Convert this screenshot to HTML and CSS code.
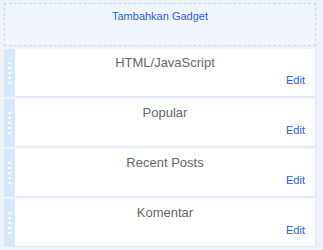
FILE: index.html
```html
<!DOCTYPE html>
<html lang="en">
<head>
  <meta charset="UTF-8">
  <meta name="viewport" content="width=device-width, initial-scale=1.0">
  <title>Tata Letak</title>
  <link rel="stylesheet" href="styles.css">
</head>
<body>
 <div class="section">
  <div class="add-gadget"><a href="#">Tambahkan Gadget</a></div>

  <div class="widget">
    <div class="handle"><span></span><span></span><span></span><span></span><span></span></div>
    <div class="widget-body">
      <div class="widget-title">HTML/JavaScript</div>
      <a class="edit-link" href="#">Edit</a>
    </div>
  </div>

  <div class="widget">
    <div class="handle"><span></span><span></span><span></span><span></span><span></span></div>
    <div class="widget-body">
      <div class="widget-title">Popular</div>
      <a class="edit-link" href="#">Edit</a>
    </div>
  </div>

  <div class="widget">
    <div class="handle"><span></span><span></span><span></span><span></span><span></span></div>
    <div class="widget-body">
      <div class="widget-title">Recent Posts</div>
      <a class="edit-link" href="#">Edit</a>
    </div>
  </div>

  <div class="widget">
    <div class="handle"><span></span><span></span><span></span><span></span><span></span></div>
    <div class="widget-body">
      <div class="widget-title">Komentar</div>
      <a class="edit-link" href="#">Edit</a>
    </div>
  </div>
 </div>
</body>
</html>
```

FILE: styles.css
```css
body {
  margin: 0;
  padding: 0;
  font-family: Arial, "Liberation Sans", sans-serif;
  background-color: #eef3fb;
}

.section {
  width: 312px;
  padding: 3px 7px 0 4px;
}

.add-gadget {
  height: 41px;
  border: 1px dashed #cad6f3;
  background-color: #f0f5fe;
  text-align: center;
}

.add-gadget a {
  display: block;
  padding-top: 6px;
  font-size: 11px;
  line-height: 13px;
  color: #2f5ad2;
  text-decoration: none;
}

.widget {
  display: flex;
  height: 47px;
  margin-top: 3px;
  border-bottom: 1px solid #dde7f6;
}

.widget + .widget {
  margin-top: 2px;
}

.handle {
  width: 11px;
  background-color: #d5e7fb;
  display: flex;
  flex-direction: column;
  justify-content: center;
  gap: 3px;
  padding-left: 4px;
  box-sizing: border-box;
}

.handle span {
  display: block;
  width: 3px;
  height: 2px;
  background: #fff;
}

.widget-body {
  flex: 1;
  background: #fff;
  border-right: 1px solid #dde7f6;
  display: flex;
  flex-direction: column;
  padding-top: 6px;
}

.widget-title {
  text-align: center;
  font-size: 13px;
  line-height: 15px;
  color: #666;
}

.edit-link {
  align-self: flex-end;
  margin: 4px 10px 0 0;
  font-size: 11px;
  line-height: 13px;
  color: #2f5ad2;
  text-decoration: none;
}
```
